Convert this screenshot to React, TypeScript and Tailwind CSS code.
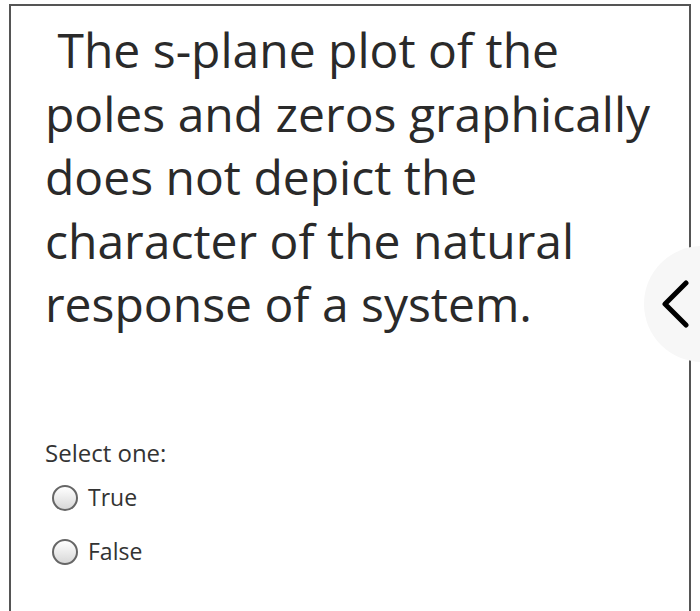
const lines = [
  '\u00a0The s-plane plot of the',
  'poles and zeros graphically',
  'does not depict the',
  'character of the natural',
  'response of a system.',
]

export default function App() {
  return (
    <div className="relative h-[611px] w-[700px] overflow-hidden bg-white" style={{ fontFamily: '"Open Sans", sans-serif' }}>
      <div className="ml-[9px] mt-[4px] h-[640px] w-[682px] border-2 border-[#555] px-[34px] pt-[12px]">
        <p className="whitespace-nowrap text-[48px] leading-[63.5px] text-[#2a2a2a]">
          {lines.map((l) => (
            <span key={l} className="block">{l}</span>
          ))}
        </p>
        <div className="mt-[101px] text-[24px] leading-[32px] text-[#333]">Select one:</div>
        <div className="mt-[15px] flex flex-col gap-[26px]">
          {['True', 'False'].map((o) => (
            <label key={o} className="flex h-[28px] items-center gap-[10px] pl-[7px] text-[23px] text-[#333]">
              <span className="h-[26px] w-[26px] rounded-full border-2 border-[#666] bg-gradient-to-b from-white to-[#d8d8d8]" />
              {o}
            </label>
          ))}
        </div>
      </div>
      <div className="absolute left-[644px] top-[246px] flex h-[116px] w-[116px] items-center rounded-full bg-[#f7f7f7] pl-[18px]">
        <svg width="28" height="48" viewBox="0 0 28 48" fill="none" stroke="#000" strokeWidth="5" strokeLinecap="round" strokeLinejoin="round">
          <path d="M24 3 3 24l21 21" />
        </svg>
      </div>
    </div>
  )
}
